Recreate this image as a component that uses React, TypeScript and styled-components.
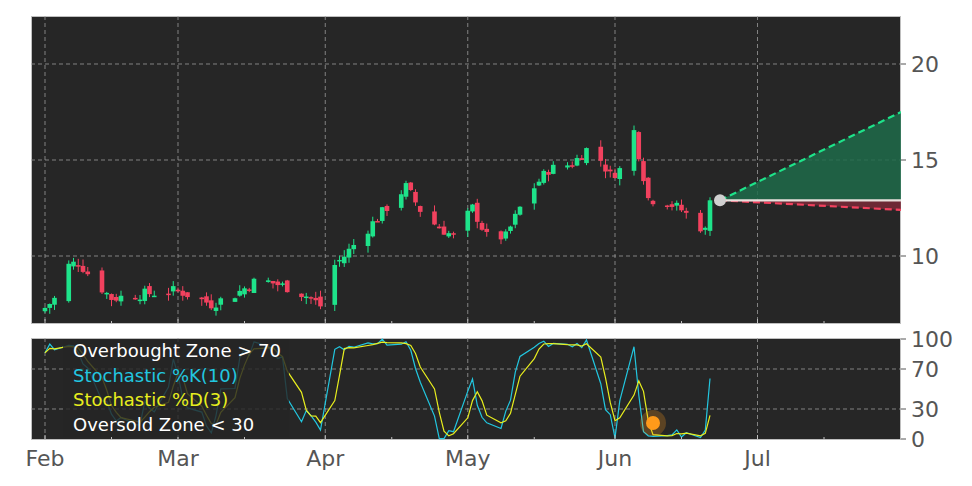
import React from 'react';
import styled, { createGlobalStyle } from 'styled-components';

const GlobalStyle = createGlobalStyle`
    body { margin: 0; background: #ffffff; font-family: "DejaVu Sans", sans-serif; }
`

const Page = styled.div`
    width: 972px;
    height: 486px;
    padding: 16px 0 0 31px;
    box-sizing: border-box;
    display: flex;
    flex-direction: column;
`

const Row = styled.div<{ $h: number; $mt?: number }>`
    display: flex;
    height: ${(p) => p.$h}px;
    margin-top: ${(p) => p.$mt || 0}px;
`

const Panel = styled.div<{ $h: number }>`
    position: relative;
    width: 870px;
    height: ${(p) => p.$h}px;
    background: #262626;
    box-shadow: inset 0 0 0 1px #bfbfbf;
    overflow: hidden;
`

const Axis = styled.svg`
    width: 70px;
    overflow: visible;
`

const Legend = styled.div`
    position: absolute;
    left: 32px;
    top: 1px;
    padding: 0 8px 0 10px;
    background: rgba(38, 38, 38, 0.82);
    font-size: 18px;
    line-height: 24.5px;
`

const LegendItem = styled.div<{ $c: string }>`
    color: ${(p) => p.$c};
`

const MonthRow = styled.div`
    position: relative;
    height: 40px;
    width: 870px;
`

const Month = styled.span<{ $x: number }>`
    position: absolute;
    left: ${(p) => p.$x}px;
    top: 6px;
    transform: translateX(-50%);
    color: #555;
    font-size: 22px;
`

const W = 870, H1 = 308, H2 = 102
const PX_DAY = 4.75
const dx = (d: number) => 14 + d * PX_DAY
const py = (p: number) => 48 + (20 - p) * 19.2
const months = [['Feb', 0], ['Mar', 28], ['Apr', 59], ['May', 89], ['Jun', 120], ['Jul', 150]] as const
const minors = [14, 42, 73, 103, 134, 164]

const keys: [number, number][] = [[0, 7.3], [3, 8], [5, 9.5], [7, 9.7], [10, 8.8], [14, 7.8], [20, 8], [28, 8.2], [35, 7.5], [40, 8], [45, 8.8], [52, 8.3], [56, 7.8], [58, 7.4], [60, 9.3], [63, 10], [70, 12], [76, 13.6], [80, 12], [86, 11], [90, 12.5], [93, 11], [97, 11], [101, 13], [106, 14.5], [111, 14.8], [115, 15.8], [119, 14.2], [121, 14.5], [124, 16.5], [127, 13], [131, 12.8], [134, 12.4], [139, 11.3], [140, 12.9]]

const interp = (d: number) => {
    for (let i = 1; i < keys.length; i++) {
        if (d <= keys[i][0]) {
            const [a, pa] = keys[i - 1], [b, pb] = keys[i]
            return pa + (pb - pa) * (d - a) / (b - a)
        }
    }
    return keys[keys.length - 1][1]
}

let seed = 7
const rnd = () => { seed = (seed * 9301 + 49297) % 233280; return seed / 233280 }

// trading days only, weekends skipped
const bars: { d: number; o: number; c: number; h: number; l: number }[] = []
let prev = 7.1
for (let d = 0; d <= 140; d++) {
    if ((d + 2) % 7 === 5 || (d + 2) % 7 === 6) continue
    const c = d === 140 ? 12.9 : interp(d) + (rnd() - 0.5) * 0.6
    const o = prev + (rnd() - 0.5) * 0.4
    const h = Math.max(o, c) + rnd() * 0.35
    const l = Math.min(o, c) - rnd() * 0.35
    bars.push({ d, o, c, h, l })
    prev = c
}

const K = bars.map((b, i) => {
    const win = bars.slice(Math.max(0, i - 9), i + 1)
    const hh = Math.max(...win.map((w) => w.h)), ll = Math.min(...win.map((w) => w.l))
    return hh === ll ? 50 : ((b.c - ll) / (hh - ll)) * 100
})
const D = K.map((_, i) => { const w = K.slice(Math.max(0, i - 2), i + 1); return w.reduce((a, b) => a + b, 0) / w.length })
const sy = (v: number) => 101 - v * 1.0
const line = (vals: number[]) => vals.map((v, i) => `${i ? 'L' : 'M'}${dx(bars[i].d).toFixed(1)},${sy(v).toFixed(1)}`).join(' ')

const Grid = ({ h, ys }: { h: number; ys: number[] }) => (
    <g stroke="#9a9a9a" strokeDasharray="4 3" strokeWidth={0.8}>
        {months.map(([m, d]) => <line key={m} x1={dx(d)} x2={dx(d)} y1={0} y2={h} />)}
        {ys.map((y) => <line key={y} x1={0} x2={W} y1={y} y2={y} />)}
    </g>
)

const Ticks = ({ h }: { h: number }) => (
    <g stroke="#bfbfbf">
        {months.map(([m, d]) => <line key={m} x1={dx(d)} x2={dx(d)} y1={h} y2={h - 5} />)}
        {minors.map((d) => <line key={d} x1={dx(d)} x2={dx(d)} y1={h} y2={h - 3} />)}
    </g>
)

const ox = dx(140) + 10, oy = py(12.9)
const upY = py(17.5), dnY = py(12.4)

const PriceChart = () => (
    <svg width={W} height={H1}>
        <Grid h={H1} ys={[py(20), py(15), py(10)]} />
        <polygon points={`${ox},${oy} ${W},${upY} ${W},${oy}`} fill="#1f6b4a" opacity={0.85} />
        <polygon points={`${ox},${oy} ${W},${oy} ${W},${dnY}`} fill="#7a2a38" opacity={0.85} />
        {bars.map((b, i) => {
            const col = b.c >= b.o ? '#1ee38a' : '#f2415e'
            const x = dx(b.d)
            const top = py(Math.max(b.o, b.c)), bot = py(Math.min(b.o, b.c))
            return (
                <g key={i}>
                    <line x1={x} x2={x} y1={py(b.h)} y2={py(b.l)} stroke={col} strokeWidth={1} />
                    <rect x={x - 2.3} y={top} width={4.6} height={Math.max(1.5, bot - top)} fill={col} />
                </g>
            )
        })}
        <line x1={ox} y1={oy} x2={W} y2={upY} stroke="#1ee38a" strokeWidth={2.2} strokeDasharray="7 4" />
        <line x1={ox} y1={oy} x2={W} y2={dnY} stroke="#f2415e" strokeWidth={2.2} strokeDasharray="7 4" />
        <line x1={ox} y1={oy} x2={W} y2={oy} stroke="#e8e0dc" strokeWidth={2.2} />
        <circle cx={ox} cy={oy} r={6} fill="#d0d0d0" />
        <Ticks h={H1} />
    </svg>
)

const StochChart = () => {
    const mi = bars.findIndex((b) => b.d >= 128)
    return (
        <svg width={W} height={H2}>
            <Grid h={H2} ys={[sy(70), sy(30)]} />
            <path d={line(K)} fill="none" stroke="#22c7e0" strokeWidth={1.2} />
            <path d={line(D)} fill="none" stroke="#e8ee1e" strokeWidth={1.2} />
            <circle cx={dx(bars[mi].d)} cy={sy(16)} r={13} fill="#ff9a1a" opacity={0.25} />
            <circle cx={dx(bars[mi].d)} cy={sy(16)} r={7} fill="#ff9a1a" />
            <Ticks h={H2} />
        </svg>
    )
}

const YAxis = ({ h, ticks }: { h: number; ticks: [string, number][] }) => (
    <Axis height={h}>
        {ticks.map(([t, y]) => (
            <g key={t}>
                <line x1={0} x2={5} y1={y} y2={y} stroke="#555" />
                <text x={10} y={y + 8} fill="#555" fontSize={22} fontFamily="DejaVu Sans, sans-serif">{t}</text>
            </g>
        ))}
    </Axis>
)

export default function App() {
    return (
        <Page>
            <GlobalStyle />
            <Row $h={H1}>
                <Panel $h={H1}><PriceChart /></Panel>
                <YAxis h={H1} ticks={[['20', py(20)], ['15', py(15)], ['10', py(10)]]} />
            </Row>
            <Row $h={H2} $mt={14}>
                <Panel $h={H2}>
                    <StochChart />
                    <Legend>
                        <LegendItem $c="#ffffff">Overbought Zone &gt; 70</LegendItem>
                        <LegendItem $c="#22c7e0">Stochastic %K(10)</LegendItem>
                        <LegendItem $c="#e8ee1e">Stochastic %D(3)</LegendItem>
                        <LegendItem $c="#ffffff">Oversold Zone &lt; 30</LegendItem>
                    </Legend>
                </Panel>
                <YAxis h={H2} ticks={[['100', sy(100)], ['70', sy(70)], ['30', sy(30)], ['0', sy(0)]]} />
            </Row>
            <MonthRow>
                {months.map(([m, d]) => <Month key={m} $x={dx(d)}>{m}</Month>)}
            </MonthRow>
        </Page>
    )
}
